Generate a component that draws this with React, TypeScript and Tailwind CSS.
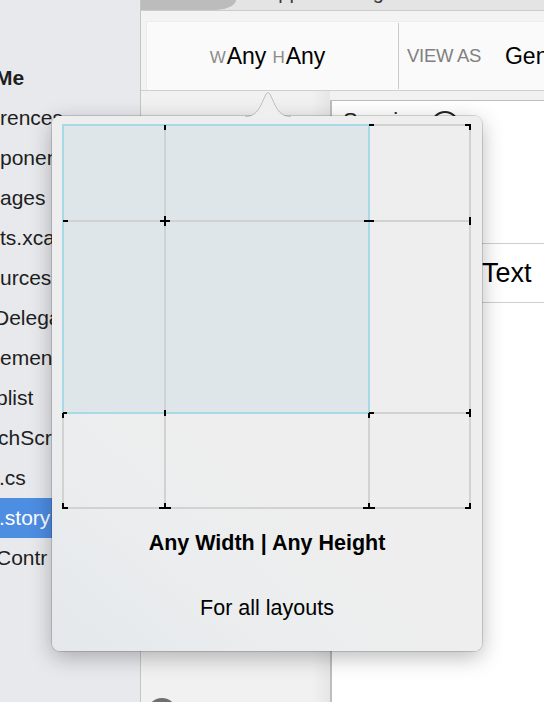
import React from 'react'

const SIDEBAR_ROWS = [
  { label: 'Me', cls: 'font-bold ml-[-5px]' },
  { label: 'rences', cls: 'ml-0' },
  { label: 'ponen', cls: 'ml-0' },
  { label: 'ages', cls: 'ml-0' },
  { label: 'ts.xca', cls: 'ml-0' },
  { label: 'urces', cls: 'ml-0' },
  { label: 'Delega', cls: 'ml-[-6px]' },
  { label: 'ement', cls: 'ml-0' },
  { label: 'plist', cls: 'ml-[-4px]' },
  { label: 'chScr', cls: 'ml-[-2px]' },
  { label: '.cs', cls: 'ml-[-1px]' },
  { label: '.story', cls: 'ml-[-1px]', selected: true },
  { label: 'Contr', cls: 'ml-[-4px]' },
]

const GRID_X = [1, 103, 307, 408]
const GRID_Y = [1, 97, 289, 384]

// little black handles where the size-class lines cross
const TICKS =
  'M103 1V6 M307 1H312 M403 1H409 M408 1V6 ' +
  'M1 97H6 M98 97H108 M103 92V102 M302 97H312 M408 93V101 ' +
  'M1 289V294 M1 289H5 M103 286V292 M307 289H312 M307 289V294 M404 289H409 M408 285V293 ' +
  'M1 379V385 M1 384H6 M97 384H109 M103 379V385 M301 384H313 M307 379V385 M403 384H409 M408 379V385'

function SizeGrid() {
  return (
    <svg width="410" height="386" viewBox="0 0 410 386" className="block">
      <rect x="1" y="1" width="306" height="288" fill="#dfe6e9" />
      {GRID_X.map((x) => (
        <line key={'x' + x} x1={x} y1={1} x2={x} y2={384} stroke="#d2d2d2" strokeWidth="2" />
      ))}
      {GRID_Y.map((y) => (
        <line key={'y' + y} x1={1} y1={y} x2={408} y2={y} stroke="#d2d2d2" strokeWidth="2" />
      ))}
      <rect x="1" y="1" width="306" height="288" fill="none" stroke="#a9d8e6" strokeWidth="2" />
      <path d={TICKS} stroke="#000" strokeWidth="2" fill="none" />
    </svg>
  )
}

function Sidebar() {
  return (
    <div className="w-[141px] shrink-0 h-full bg-[#e8e9ed] border-r border-[#c4c4c6] overflow-hidden pt-[58px]">
      {SIDEBAR_ROWS.map((row) => (
        <div
          key={row.label}
          className={
            'h-10 leading-[40px] text-[21px] whitespace-nowrap ' +
            (row.selected ? 'bg-[#4d8de2] text-white' : 'text-[#1e1e1e]')
          }
        >
          <span className={'block ' + row.cls}>{row.label}</span>
        </div>
      ))}
    </div>
  )
}

function Toolbar() {
  return (
    <>
      <div className="h-[11px] shrink-0 flex bg-[#e4e4e4] border-b border-[#cbcbcb] overflow-hidden">
        <div className="w-[95px] shrink-0 h-full bg-[#bcbcbc] rounded-br-[22px_10px]" />
        <span className="ml-[29px] mt-[-18px] text-[20px] leading-[20px] text-[#3a3a3a] whitespace-nowrap">
          Apple Settings
        </span>
      </div>
      <div className="h-[80px] shrink-0 bg-[#f3f3f3] pl-[5px] pt-[10px] border-b border-[#d0d0d0]">
        <div className="h-full flex bg-[#fafafa] border-t border-l border-[#ececec] whitespace-nowrap overflow-hidden">
          <div className="w-[251px] shrink-0 flex items-center justify-center pr-[10px]">
            <span className="text-[17px] text-[#8c8c8c] self-end mb-[24px] leading-none">W</span>
            <span className="text-[23px] text-black ml-[1px]">Any</span>
            <span className="text-[17px] text-[#8c8c8c] ml-[6px] self-end mb-[24px] leading-none">H</span>
            <span className="text-[23px] text-black ml-[1px]">Any</span>
          </div>
          <div className="w-px shrink-0 bg-[#c9c9c9] my-[1px]" />
          <div className="flex items-center pl-[8px] shrink-0">
            <span className="text-[18.5px] text-[#808080] tracking-[-0.3px]">VIEW AS</span>
            <span className="text-[23px] text-black ml-[24px]">Generic</span>
          </div>
        </div>
      </div>
    </>
  )
}

function Canvas() {
  return (
    <div className="flex-1 flex bg-[#f1f1f1] min-h-0">
      <div className="w-[189px] shrink-0 flex flex-col justify-end bg-[linear-gradient(90deg,#f1f1f1_90%,#e6e6e6)]">
        <div className="ml-[6px] mb-[-26px] w-[30px] h-[30px] rounded-full border-[4px] border-[#6f6f6f]" />
      </div>
      <div className="flex-1 mt-[9px] bg-white border-l-2 border-t border-[#bdbdbd] overflow-hidden">
        <div className="h-[143px] border-b border-[#cfcfcf] pl-[11px] pt-[7px] flex items-start whitespace-nowrap">
          <span className="text-[22px] leading-[26px] text-[#222]">Scenic</span>
          <div className="ml-[22px] mt-[3px] w-[28px] h-[28px] rounded-full border-2 border-[#222]" />
        </div>
        <div className="h-[59px] border-b border-[#cfcfcf] pl-[150px] flex items-center">
          <span className="text-[27px] text-black">Text</span>
        </div>
      </div>
    </div>
  )
}

function Popover() {
  return (
    <>
      <div className="absolute left-[52px] top-[116px] w-[430px] h-[535px] rounded-[8px] bg-[linear-gradient(40deg,#e4e8ec_0%,#ebedee_22%,#eeeeee_40%)] shadow-[0_6px_22px_rgba(0,0,0,0.28),0_0_0_1px_rgba(0,0,0,0.14)] p-[8px] flex flex-col items-center">
        <SizeGrid />
        <div className="mt-[20px] text-[21.5px] leading-[26px] font-bold text-black">
          Any Width | Any Height
        </div>
        <div className="mt-[39px] text-[21.5px] leading-[26px] text-black">For all layouts</div>
      </div>
      <svg
        className="absolute left-[245px] top-[91px]"
        width="46"
        height="26"
        viewBox="0 0 46 26"
      >
        <path
          d="M0 25.5 C8 25.5 12 22 16 14 L21 3 Q23 0 25 3 L30 14 C34 22 38 25.5 46 25.5 Z"
          fill="#efefef"
        />
        <path
          d="M0 25.5 C8 25.5 12 22 16 14 L21 3 Q23 0 25 3 L30 14 C34 22 38 25.5 46 25.5"
          fill="none"
          stroke="rgba(0,0,0,0.2)"
          strokeWidth="1"
        />
      </svg>
    </>
  )
}

export default function App() {
  return (
    <div className="relative w-[544px] h-[702px] overflow-hidden flex font-['Liberation_Sans',Arial,sans-serif] bg-white">
      <Sidebar />
      <div className="flex-1 flex flex-col min-w-0">
        <Toolbar />
        <Canvas />
      </div>
      <Popover />
    </div>
  )
}
